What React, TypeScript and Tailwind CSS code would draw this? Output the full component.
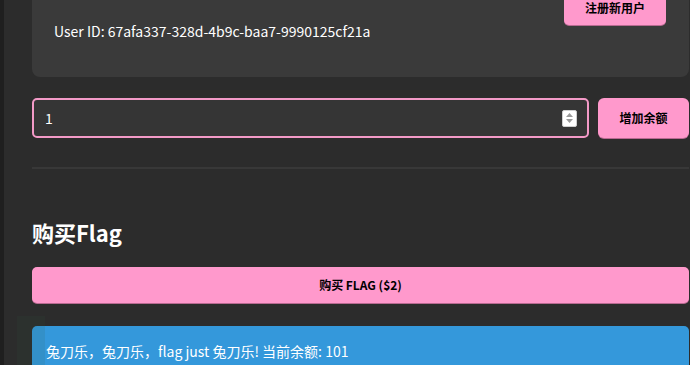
import React from "react";

export default function App() {
  const font = { fontFamily: '"Noto Sans CJK SC", "Noto Sans", sans-serif' };
  return (
    <div className="relative h-[365px] w-[690px] overflow-hidden bg-[#2c2c2c] flex" style={font}>
      <div className="w-[4px] shrink-0 bg-[#1f1f1f]" />
      <div className="flex-1 pl-[28px] pr-[1px]">
        <div className="-mt-[27px] flex flex-col">
          {/* user card */}
          <div className="flex items-start justify-between rounded-lg bg-[#3a3a3a] pl-[22px] pr-[23px] pt-[16px] pb-[36px]">
            <div className="pt-[32px]">
              <p className="text-[14px] leading-[20px] text-white">User ID: 67afa337-328d-4b9c-baa7-9990125cf21a</p>
            </div>
            <button className="mt-[2px] h-[34px] w-[102px] rounded-[5px] bg-[#ff99cc] text-[12px] font-bold text-black shadow-[0_1px_0_#b86a91]">
              注册新用户
            </button>
          </div>

          {/* balance input */}
          <div className="mt-[21px] flex gap-[9px]">
            <div className="relative flex h-[40px] w-[557px] items-center rounded-[5px] border-2 border-[#f39ac7] bg-[#353535] pl-[11px] pr-[10px]">
              <input
                type="text"
                defaultValue="1"
                className="flex-1 bg-transparent text-[14px] text-white outline-none"
              />
              <div className="flex h-[17px] w-[15px] flex-col items-center justify-center gap-[2px] rounded-[2px] border border-[#cfcfcf] bg-white">
                <svg width="7" height="4" viewBox="0 0 7 4"><path d="M0 4 L3.5 0 L7 4 Z" fill="#9a9a9a" /></svg>
                <svg width="7" height="4" viewBox="0 0 7 4"><path d="M0 0 L3.5 4 L7 0 Z" fill="#9a9a9a" /></svg>
              </div>
            </div>
            <button className="h-[40px] w-[91px] rounded-[6px] bg-[#ff99cc] text-[12px] font-bold text-black shadow-[0_1px_0_#b86a91]">
              增加余额
            </button>
          </div>

          {/* divider */}
          <div className="mt-[29px] h-[2px] bg-[#383838]" />

          {/* buy flag */}
          <h2 className="mt-[49px] text-[22px] font-bold leading-[28px] text-white">购买Flag</h2>
          <button className="mt-[21px] h-[36px] w-full rounded-[5px] bg-[#ff99cc] text-[12px] font-bold text-black shadow-[0_1px_0_#b86a91]">
            购买 FLAG ($2)
          </button>

          {/* alert */}
          <div className="mt-[23px] rounded-[5px] bg-[#3498db] px-[14px] pt-[15px] pb-[16px]">
            <p className="text-[14px] leading-[20px] text-white">兔刀乐，兔刀乐，flag just 兔刀乐! 当前余额: 101</p>
          </div>
        </div>
      </div>

      {/* watermark */}
      <div className="pointer-events-none absolute left-[17px] top-[316px] h-[49px] w-[28px] bg-[#2f5a44] opacity-[0.12]" />
    </div>
  );
}
